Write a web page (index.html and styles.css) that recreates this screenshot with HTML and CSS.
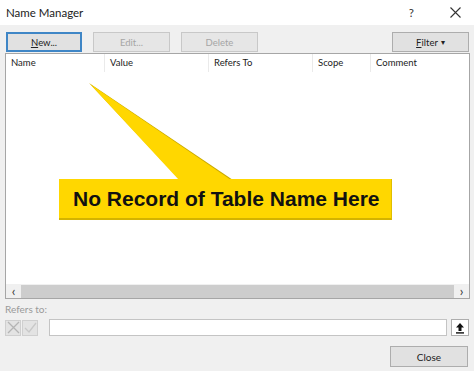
FILE: index.html
```html
<!DOCTYPE html>
<html>
<head>
<meta charset="utf-8">
<link rel="stylesheet" href="styles.css">
</head>
<body>
<div class="window">
  <div class="titlebar">
    <span class="title">Name Manager</span>
    <div class="title-actions">
      <span class="help">?</span>
      <svg class="close-x" width="11" height="11" viewBox="0 0 11 11"><path d="M0.5 0.5L10.5 10.5M10.5 0.5L0.5 10.5" stroke="#333" stroke-width="1.1"/></svg>
    </div>
  </div>
  <div class="content">
    <div class="toolbar">
      <button class="btn btn-default"><u>N</u>ew...</button>
      <button class="btn disabled">Edit...</button>
      <button class="btn disabled">Delete</button>
      <div class="spacer"></div>
      <button class="btn"><u>F</u>ilter <span class="caret">&#9662;</span></button>
    </div>
    <div class="list">
      <div class="list-head">
        <div class="col c-name">Name</div>
        <div class="col c-value">Value</div>
        <div class="col c-refers">Refers To</div>
        <div class="col c-scope">Scope</div>
        <div class="col c-comment">Comment</div>
      </div>
      <div class="list-body"></div>
      <div class="hscroll">
        <span class="arrow">&#8249;</span>
        <div class="thumb"></div>
        <span class="arrow">&#8250;</span>
      </div>
      <svg class="pointer" width="160" height="110" viewBox="0 0 160 110">
        <polygon points="2,0 93,97 146,97" fill="#c9a900"/>
        <polygon points="3,1 92,97 144,97" fill="#ffd700"/>
      </svg>
      <div class="callout">No Record of Table Name Here</div>
    </div>
    <div class="refers-label">Refers to:</div>
    <div class="refers-row">
      <div class="mini-btns">
        <span class="mini"><svg width="13" height="13" viewBox="0 0 13 13"><path d="M1 1L12 12M12 1L1 12" stroke="#b4b4b4" stroke-width="1.3"/></svg></span>
        <span class="mini"><svg width="13" height="13" viewBox="0 0 13 13"><path d="M1 7L5 11L12 2" fill="none" stroke="#c8c8c8" stroke-width="1.3"/></svg></span>
      </div>
      <div class="input"></div>
      <span class="upload"><svg width="10" height="12" viewBox="0 0 10 12"><path d="M5 1L9 5.5H6.5V9H3.5V5.5H1Z" fill="#111"/><rect x="1" y="10.2" width="8" height="1.4" fill="#111"/></svg></span>
    </div>
    <div class="footer">
      <button class="btn btn-close">Close</button>
    </div>
  </div>
</div>
</body>
</html>
```
FILE: styles.css
```css
* { box-sizing: border-box; }
html, body { margin: 0; padding: 0; }
body {
  width: 474px;
  height: 371px;
  overflow: hidden;
  font-family: Lato, "Open Sans", sans-serif;
  font-size: 9.5px;
  color: #222;
  background: #f0f0f0;
}
.window { width: 474px; height: 371px; display: flex; flex-direction: column; }
.titlebar {
  height: 25px;
  background: #fff;
  display: flex;
  align-items: center;
  justify-content: space-between;
  padding: 0 13px 0 6px;
}
.title { font-size: 11.5px; color: #222; }
.title-actions { display: flex; align-items: center; gap: 36px; }
.help { font-size: 11.5px; color: #333; }
.close-x { display: block; }
.content {
  flex: 1;
  background: #f0f0f0;
  padding: 7px 5px 0 5px;
  display: flex;
  flex-direction: column;
}
.toolbar { display: flex; align-items: center; gap: 11px; padding-left: 1px; height: 20px; }
.spacer { flex: 1; }
.btn {
  font-family: Lato, "Open Sans", sans-serif;
  font-size: 9.5px;
  width: 77px;
  height: 20px;
  background: #e1e1e1;
  border: 1px solid #adadad;
  color: #222;
  padding: 0;
  margin: 0;
  display: flex;
  align-items: center;
  justify-content: center;
}
.btn-default { border: 2px solid #3f86c6; width: 76px; }
.btn.disabled { color: #a5a5a5; border-color: #c8c8c8; background: #e6e6e6; }
.caret { font-size: 8px; margin-left: 3px; }
.list {
  position: relative;
  margin-top: 1px;
  height: 246px;
  width: 465px;
  border: 1px solid #a6a6a6;
  background: #fff;
  display: flex;
  flex-direction: column;
}
.list-head { display: flex; height: 18px; align-items: center; }
.col { height: 18px; line-height: 18px; padding-left: 5px; border-right: 1px solid #eaeaea; color: #222; }
.c-name { width: 99px; }
.c-value { width: 104px; }
.c-refers { width: 104px; }
.c-scope { width: 58px; }
.c-comment { flex: 1; border-right: none; }
.list-body { flex: 1; }
.hscroll {
  height: 14px;
  display: flex;
  align-items: center;
  background: #f0f0f0;
}
.arrow { width: 15px; text-align: center; font-size: 13px; line-height: 14px; color: #333; }
.thumb { flex: 1; height: 13px; background: #cdcdcd; }
.pointer { position: absolute; left: 81px; top: 29px; }
.callout {
  position: absolute;
  left: 53px;
  top: 125px;
  width: 333px;
  height: 41px;
  background: #ffd700;
  border-bottom: 2px solid #d4b300;
  border-right: 1px solid #e0be00;
  font-family: "Liberation Sans", Arial, sans-serif;
  font-weight: bold;
  font-size: 21px;
  color: #111;
  display: flex;
  align-items: center;
  padding-left: 14px;
  padding-top: 1px;
}
.refers-label { color: #9a9a9a; height: 19px; line-height: 18px; margin-top: 1px; font-size: 10px; }
.refers-row { display: flex; align-items: center; height: 17px; }
.mini-btns { display: flex; gap: 1px; width: 44px; }
.mini {
  width: 16px; height: 16px;
  background: #e3e3e3;
  border: 1px solid #cfcfcf;
  display: flex; align-items: center; justify-content: center;
}
.input { width: 398px; height: 17px; background: #fff; border: 1px solid #c4c4c4; }
.upload {
  margin-left: 4px;
  width: 18px; height: 17px;
  background: #fff;
  border: 1px solid #adadad;
  display: flex; align-items: center; justify-content: center;
}
.footer { display: flex; justify-content: flex-end; margin-top: 10px; }
.btn-close { width: 78px; height: 21px; margin-right: 1px; font-size: 10px; }
```
